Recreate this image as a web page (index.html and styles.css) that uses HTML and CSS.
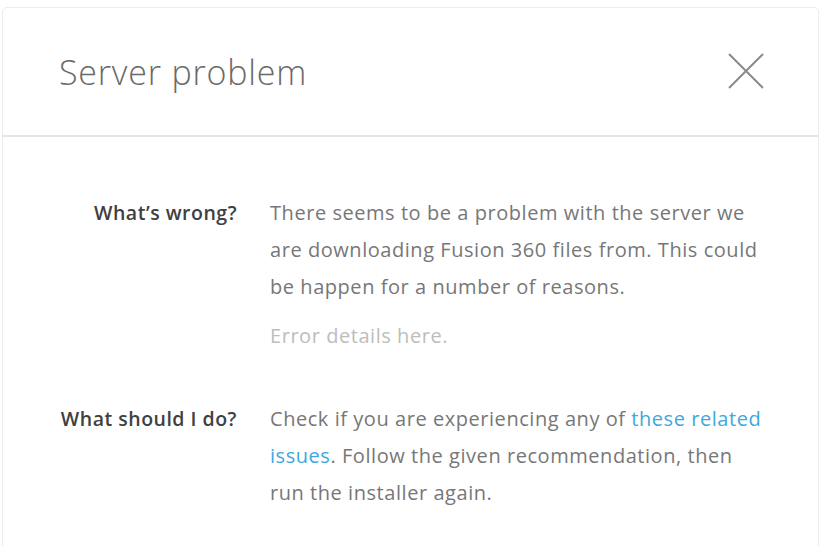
FILE: index.html
```html
<!DOCTYPE html>
<html>
<head>
<meta charset="utf-8">
<link rel="stylesheet" href="styles.css">
</head>
<body>
<div class="dialog">
  <div class="header">
    <h1 class="title">Server problem</h1>
    <button class="close" aria-label="Close">
      <svg width="36" height="36" viewBox="0 0 36 36"><path d="M1 1 L35 35 M35 1 L1 35" stroke="#8a8a8a" stroke-width="2" fill="none"/></svg>
    </button>
  </div>
  <div class="body">
    <div class="row">
      <div class="label">What’s wrong?</div>
      <div class="content">
        <p class="text">There seems to be a problem with the server we are downloading Fusion 360 files from. This could be happen for a number of reasons.</p>
        <p class="details">Error details here.</p>
      </div>
    </div>
    <div class="row">
      <div class="label">What should I do?</div>
      <div class="content">
        <p class="text">Check if you are experiencing any of <a class="link" href="#">these related issues</a>. Follow the given recommendation, then run the installer again.</p>
      </div>
    </div>
  </div>
</div>
</body>
</html>
```

FILE: styles.css
```css
html, body {
  margin: 0;
  padding: 0;
  background: #ffffff;
  height: 100%;
  overflow: hidden;
}
body {
  padding: 7px 0 0 2px;
  font-family: "Open Sans", "Liberation Sans", sans-serif;
}
.dialog {
  width: 815px;
  height: 600px;
  border: 1px solid #ececec;
  border-radius: 5px;
  background: #fff;
}
.header {
  height: 127px;
  border-bottom: 2px solid #e6e6e6;
  display: flex;
  align-items: center;
  justify-content: space-between;
  padding: 0 54px 0 56px;
}
.title {
  margin: 0;
  font-weight: 300;
  font-size: 34px;
  letter-spacing: 0.8px;
  color: #6a6a6a;
}
.close {
  border: 0;
  background: none;
  padding: 0;
  width: 36px;
  height: 36px;
  margin-top: -1px;
}
.close svg { display: block; }
.body {
  padding-top: 57px;
  display: flex;
  flex-direction: column;
  gap: 46px;
}
.row {
  display: grid;
  grid-template-columns: 234px 500px;
  column-gap: 33px;
}
.label {
  text-align: right;
  font-weight: 600;
  font-size: 19.5px;
  letter-spacing: 0.5px;
  line-height: 37px;
  color: #404040;
}
.content p { margin: 0; }
.text {
  font-size: 20px;
  letter-spacing: 0.55px;
  line-height: 37px;
  color: #777;
}
.details {
  margin-top: 12px !important;
  font-size: 20px;
  letter-spacing: 0.55px;
  line-height: 37px;
  color: #bdbdbd;
}
.link {
  color: #3ea8dd;
  text-decoration: none;
}
```
